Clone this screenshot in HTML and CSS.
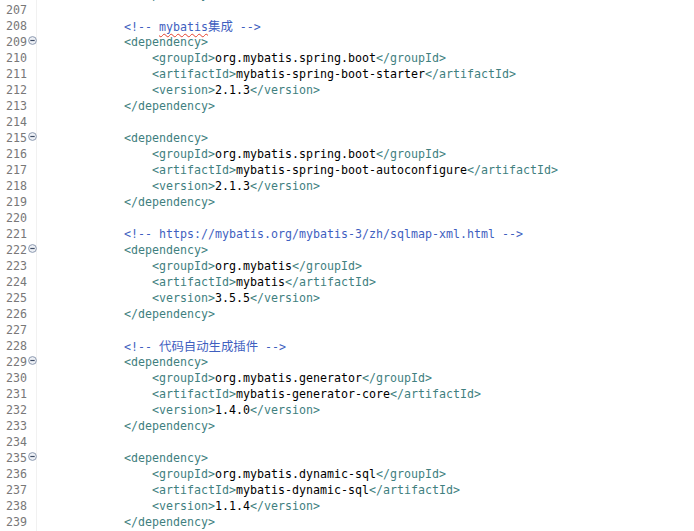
FILE: index.html
```html
<!DOCTYPE html>
<html>
<head>
<meta charset="utf-8">
<link rel="stylesheet" href="styles.css">
</head>
<body>
<div class="editor">
  <div class="line"><div class="gutter"><span class="num"></span></div><div class="code">        <span class="t">&lt;/dependency&gt;</span></div></div>
  <div class="line"><div class="gutter"><span class="num">207</span></div><div class="code"></div></div>
  <div class="line"><div class="gutter"><span class="num">208</span></div><div class="code">        <span class="c">&lt;!-- <span class="spell">mybatis</span><span class="cjk">集成</span> --&gt;</span></div></div>
  <div class="line"><div class="gutter"><span class="num">209</span><svg class="fold" viewBox="0 0 9 9"><circle cx="4.5" cy="4.5" r="3.9"/><line x1="2.3" y1="4.5" x2="6.7" y2="4.5"/></svg></div><div class="code">        <span class="t">&lt;dependency&gt;</span></div></div>
  <div class="line"><div class="gutter"><span class="num">210</span></div><div class="code">            <span class="t">&lt;groupId&gt;</span>org.mybatis.spring.boot<span class="t">&lt;/groupId&gt;</span></div></div>
  <div class="line"><div class="gutter"><span class="num">211</span></div><div class="code">            <span class="t">&lt;artifactId&gt;</span>mybatis-spring-boot-starter<span class="t">&lt;/artifactId&gt;</span></div></div>
  <div class="line"><div class="gutter"><span class="num">212</span></div><div class="code">            <span class="t">&lt;version&gt;</span>2.1.3<span class="t">&lt;/version&gt;</span></div></div>
  <div class="line"><div class="gutter"><span class="num">213</span></div><div class="code">        <span class="t">&lt;/dependency&gt;</span></div></div>
  <div class="line"><div class="gutter"><span class="num">214</span></div><div class="code"></div></div>
  <div class="line"><div class="gutter"><span class="num">215</span><svg class="fold" viewBox="0 0 9 9"><circle cx="4.5" cy="4.5" r="3.9"/><line x1="2.3" y1="4.5" x2="6.7" y2="4.5"/></svg></div><div class="code">        <span class="t">&lt;dependency&gt;</span></div></div>
  <div class="line"><div class="gutter"><span class="num">216</span></div><div class="code">            <span class="t">&lt;groupId&gt;</span>org.mybatis.spring.boot<span class="t">&lt;/groupId&gt;</span></div></div>
  <div class="line"><div class="gutter"><span class="num">217</span></div><div class="code">            <span class="t">&lt;artifactId&gt;</span>mybatis-spring-boot-autoconfigure<span class="t">&lt;/artifactId&gt;</span></div></div>
  <div class="line"><div class="gutter"><span class="num">218</span></div><div class="code">            <span class="t">&lt;version&gt;</span>2.1.3<span class="t">&lt;/version&gt;</span></div></div>
  <div class="line"><div class="gutter"><span class="num">219</span></div><div class="code">        <span class="t">&lt;/dependency&gt;</span></div></div>
  <div class="line"><div class="gutter"><span class="num">220</span></div><div class="code"></div></div>
  <div class="line"><div class="gutter"><span class="num">221</span></div><div class="code">        <span class="c">&lt;!-- https://mybatis.org/mybatis-3/zh/sqlmap-xml.html --&gt;</span></div></div>
  <div class="line"><div class="gutter"><span class="num">222</span><svg class="fold" viewBox="0 0 9 9"><circle cx="4.5" cy="4.5" r="3.9"/><line x1="2.3" y1="4.5" x2="6.7" y2="4.5"/></svg></div><div class="code">        <span class="t">&lt;dependency&gt;</span></div></div>
  <div class="line"><div class="gutter"><span class="num">223</span></div><div class="code">            <span class="t">&lt;groupId&gt;</span>org.mybatis<span class="t">&lt;/groupId&gt;</span></div></div>
  <div class="line"><div class="gutter"><span class="num">224</span></div><div class="code">            <span class="t">&lt;artifactId&gt;</span>mybatis<span class="t">&lt;/artifactId&gt;</span></div></div>
  <div class="line"><div class="gutter"><span class="num">225</span></div><div class="code">            <span class="t">&lt;version&gt;</span>3.5.5<span class="t">&lt;/version&gt;</span></div></div>
  <div class="line"><div class="gutter"><span class="num">226</span></div><div class="code">        <span class="t">&lt;/dependency&gt;</span></div></div>
  <div class="line"><div class="gutter"><span class="num">227</span></div><div class="code"></div></div>
  <div class="line"><div class="gutter"><span class="num">228</span></div><div class="code">        <span class="c">&lt;!-- <span class="cjk">代码自动生成插件</span> --&gt;</span></div></div>
  <div class="line"><div class="gutter"><span class="num">229</span><svg class="fold" viewBox="0 0 9 9"><circle cx="4.5" cy="4.5" r="3.9"/><line x1="2.3" y1="4.5" x2="6.7" y2="4.5"/></svg></div><div class="code">        <span class="t">&lt;dependency&gt;</span></div></div>
  <div class="line"><div class="gutter"><span class="num">230</span></div><div class="code">            <span class="t">&lt;groupId&gt;</span>org.mybatis.generator<span class="t">&lt;/groupId&gt;</span></div></div>
  <div class="line"><div class="gutter"><span class="num">231</span></div><div class="code">            <span class="t">&lt;artifactId&gt;</span>mybatis-generator-core<span class="t">&lt;/artifactId&gt;</span></div></div>
  <div class="line"><div class="gutter"><span class="num">232</span></div><div class="code">            <span class="t">&lt;version&gt;</span>1.4.0<span class="t">&lt;/version&gt;</span></div></div>
  <div class="line"><div class="gutter"><span class="num">233</span></div><div class="code">        <span class="t">&lt;/dependency&gt;</span></div></div>
  <div class="line"><div class="gutter"><span class="num">234</span></div><div class="code"></div></div>
  <div class="line"><div class="gutter"><span class="num">235</span><svg class="fold" viewBox="0 0 9 9"><circle cx="4.5" cy="4.5" r="3.9"/><line x1="2.3" y1="4.5" x2="6.7" y2="4.5"/></svg></div><div class="code">        <span class="t">&lt;dependency&gt;</span></div></div>
  <div class="line"><div class="gutter"><span class="num">236</span></div><div class="code">            <span class="t">&lt;groupId&gt;</span>org.mybatis.dynamic-sql<span class="t">&lt;/groupId&gt;</span></div></div>
  <div class="line"><div class="gutter"><span class="num">237</span></div><div class="code">            <span class="t">&lt;artifactId&gt;</span>mybatis-dynamic-sql<span class="t">&lt;/artifactId&gt;</span></div></div>
  <div class="line"><div class="gutter"><span class="num">238</span></div><div class="code">            <span class="t">&lt;version&gt;</span>1.1.4<span class="t">&lt;/version&gt;</span></div></div>
  <div class="line"><div class="gutter"><span class="num">239</span></div><div class="code">        <span class="t">&lt;/dependency&gt;</span></div></div>
  <div class="line"><div class="gutter"><span class="num"></span></div><div class="code"></div></div>
</div>
</body>
</html>
```
FILE: styles.css
```css
html, body {
  margin: 0;
  padding: 0;
  background: #ffffff;
  height: 100%;
  overflow: hidden;
}

.editor {
  margin-top: -14px;
  font-family: "DejaVu Sans Mono", "Liberation Mono", "Noto Sans CJK SC", monospace;
  font-size: 11.63px;
  color: #000000;
}

.line {
  display: flex;
  height: 16px;
  line-height: 16px;
}

.gutter {
  width: 37px;
  flex: none;
  display: flex;
  align-items: flex-start;
  padding-left: 6px;
  box-sizing: border-box;
  border-right: 1px solid #f1f1f1;
  color: #787878;
}

.num {
  width: 21px;
  flex: none;
}

.fold {
  width: 9px;
  height: 9px;
  margin-top: 2px;
  margin-left: 1px;
  flex: none;
}

.fold circle {
  fill: #eef1f6;
  stroke: #8d9ab0;
  stroke-width: 1;
}

.fold line {
  stroke: #3e4c66;
  stroke-width: 1.2;
}

.code {
  white-space: pre;
  padding-left: 31px;
}

.t {
  color: #3f7f7f;
}

.c {
  color: #3f5fbf;
}

.cjk {
  font-family: "Noto Sans CJK SC", sans-serif;
  font-size: 12.4px;
}

.spell {
  text-decoration: underline wavy #e5412d;
  text-decoration-thickness: 1px;
  text-underline-offset: 2px;
}
```
